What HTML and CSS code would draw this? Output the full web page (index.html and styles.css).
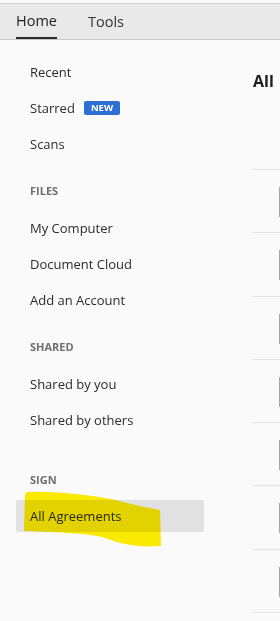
FILE: index.html
```html
<!DOCTYPE html>
<html>
<head>
    <title>Home</title>
    <link rel="stylesheet" href="styles.css">
</head>
<body>

<div class="tab-bar">
    <div class="tab active">Home</div>
    <div class="tab">Tools</div>
</div>

<div class="main">
    <div class="sidebar">
        <div class="nav-item">Recent</div>
        <div class="nav-item">Starred <span class="badge">NEW</span></div>
        <div class="nav-item">Scans</div>

        <div class="nav-heading">Files</div>
        <div class="nav-item">My Computer</div>
        <div class="nav-item">Document Cloud</div>
        <div class="nav-item">Add an Account</div>

        <div class="nav-heading">Shared</div>
        <div class="nav-item">Shared by you</div>
        <div class="nav-item">Shared by others</div>

        <div class="nav-heading sign">Sign</div>
        <div class="nav-item selected">All Agreements</div>

        <!-- highlighter mark drawn over the selected item -->
        <svg class="marker" width="200" height="70" viewBox="0 0 200 70">
            <path d="M10 2 C40 1 80 5 110 13 C125 17 135 18 143 20 L144 56 C120 58 100 53 85 47 C60 42 30 42 7 41 L8 4 Z" fill="#ffee00"/>
        </svg>
    </div>

    <div class="content">
        <div class="content-title">All</div>
        <div class="rows">
            <div class="row"><div class="thumb"></div></div>
            <div class="row"><div class="thumb"></div></div>
            <div class="row"><div class="thumb"></div></div>
            <div class="row"><div class="thumb"></div></div>
            <div class="row"><div class="thumb"></div></div>
            <div class="row"><div class="thumb"></div></div>
            <div class="row"><div class="thumb"></div></div>
            <div class="row"><div class="thumb"></div></div>
        </div>
    </div>
</div>

</body>
</html>
```

FILE: styles.css
```css
body {
    font-family: 'Open Sans', 'Noto Sans', sans-serif;
    background-color: #fafafa;
    color: #2c2c2c;
    margin: 0;
    padding: 0;
    width: 280px;
    height: 621px;
    overflow: hidden;
}

.tab-bar {
    display: flex;
    gap: 31px;
    height: 35px;
    padding: 0 16px;
    margin-top: 3px;
    border-top: 1px solid #d0d0d0;
    border-bottom: 1px solid #c8c8c8;
    background-color: #e9e9e9;
}

.tab {
    font-size: 14.5px;
    line-height: 35px;
    color: #333;
    box-sizing: border-box;
    height: 35px;
}

.tab.active {
    color: #222;
    border-bottom: 2px solid #2b2b2b;
    line-height: 33px;
    margin-bottom: -1px;
}

.main {
    display: flex;
    height: 581px;
    overflow: hidden;
}

.sidebar {
    position: relative;
    width: 253px;
    flex-shrink: 0;
    padding-top: 16px;
}

.nav-item {
    display: flex;
    align-items: center;
    gap: 9px;
    width: 188px;
    height: 32px;
    margin: 0 0 4px 16px;
    padding-left: 14px;
    box-sizing: border-box;
    border-radius: 3px;
    font-size: 13px;
}

.nav-item.selected {
    background-color: #e1e1e1;
}

.badge {
    display: inline-block;
    background-color: #2d6fd3;
    color: #fff;
    font-size: 9.5px;
    font-weight: bold;
    line-height: 14px;
    padding: 0 7px;
    border-radius: 2px;
}

.nav-heading {
    padding: 16px 0 10px 30px;
    line-height: 22px;
    font-size: 11px;
    font-weight: bold;
    color: #6e6e6e;
    text-transform: uppercase;
}

.nav-heading.sign {
    padding-top: 29px;
    padding-bottom: 9px;
}

.marker {
    position: absolute;
    left: 17px;
    top: 450px;
    mix-blend-mode: multiply;
}

.content {
    flex: 1;
    overflow: hidden;
}

.content-title {
    font-size: 16px;
    font-weight: bold;
    color: #1e1e1e;
    margin-top: 29px;
    line-height: 24px;
    height: 100px;
}

.row {
    height: 63.3px;
    border-top: 1px solid #e2e2e2;
    padding-top: 17px;
    box-sizing: border-box;
}

.thumb {
    width: 10px;
    height: 30px;
    margin-left: 26px;
    border-left: 2px solid #a6a6a6;
    background-color: #f4f4f4;
}
```
